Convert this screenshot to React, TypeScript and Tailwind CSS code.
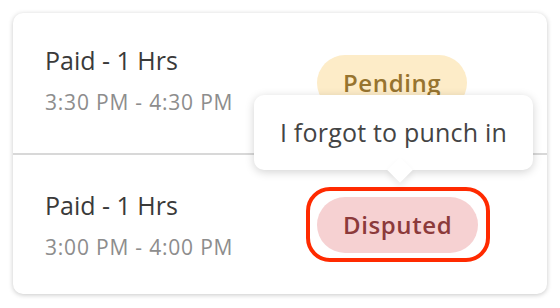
import React from 'react';

interface Shift {
  id: string;
  title: string;
  time: string;
  status: 'pending' | 'disputed';
}

const shifts: Shift[] = [
  { id: 'a', title: 'Paid - 1 Hrs', time: '3:30 PM - 4:30 PM', status: 'pending' },
  { id: 'b', title: 'Paid - 1 Hrs', time: '3:00 PM - 4:00 PM', status: 'disputed' },
];

const StatusBadge: React.FC<{ status: Shift['status'] }> = ({ status }) => {
  if (status === 'pending') {
    return (
      <span className="inline-flex h-[56px] items-center rounded-full bg-[#fdecc8] px-[26px] text-[24px] font-semibold tracking-[0.6px] text-[#97742f]">
        Pending
      </span>
    );
  }
  return (
    <span className="relative inline-flex h-[56px] items-center rounded-full bg-[#f6d1d2] px-[26px] text-[24px] font-semibold tracking-[0.6px] text-[#8c3a3b]">
      Disputed
      {/* highlight ring */}
      <span className="absolute -top-[10px] -bottom-[9px] -left-[11px] -right-[12px] rounded-[24px] border-4 border-[#ff2a00]" />
    </span>
  );
};

export default function App() {
  return (
    <div className="min-h-[308px] bg-white p-[13px] font-['Open_Sans',sans-serif]">
      <div className="relative h-[281px] rounded-[10px] bg-white shadow-[0_1px_5px_rgba(0,0,0,0.22)]">
        {shifts.map((shift, i) => (
          <div
            key={shift.id}
            className={`flex items-center pl-[32px] ${i === 0 ? 'h-[142px] border-b-2 border-[#d8d8d8]' : 'h-[139px]'}`}
          >
            <div className={`w-[272px] ${i === 0 ? 'mb-[6px]' : ''}`}>
              <div className="text-[25px] leading-[30px] text-[#3a3a3a]">{shift.title}</div>
              <div className="mt-[15px] text-[21px] leading-[25px] tracking-[0.8px] text-[#8d8d8d]">{shift.time}</div>
            </div>
            <StatusBadge status={shift.status} />
          </div>
        ))}

        {/* tooltip */}
        <div className="absolute left-[241px] top-[82px] flex h-[75px] w-[279px] items-center justify-center rounded-[10px] bg-white shadow-[0_2px_10px_rgba(0,0,0,0.18)]">
          <span className="absolute left-[137px] top-[66px] h-[18px] w-[18px] rotate-45 bg-white shadow-[3px_3px_6px_rgba(0,0,0,0.08)]" />
          <span className="relative rounded-[10px] bg-white text-[25px] tracking-[0.2px] text-[#444444]">I forgot to punch in</span>
        </div>
      </div>
    </div>
  );
}
